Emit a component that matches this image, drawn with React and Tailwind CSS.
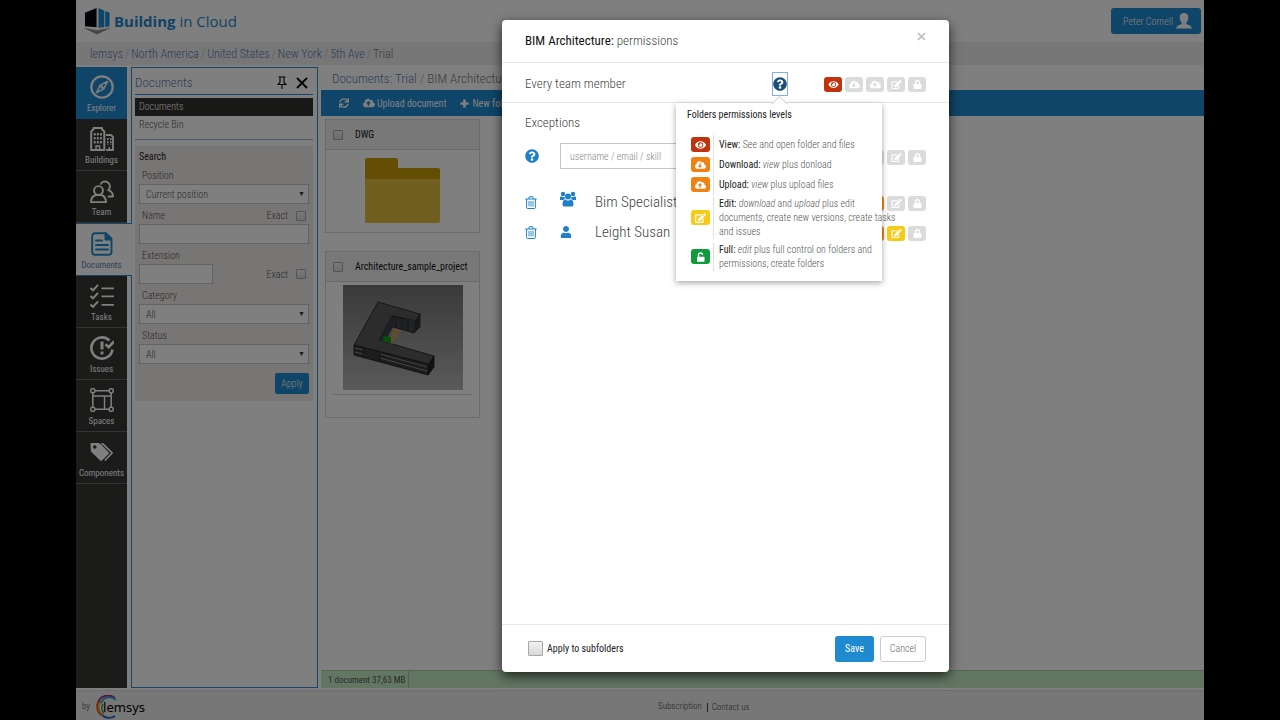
import React from 'react';
import {
  FaCloudDownloadAlt,
  FaCloudUploadAlt,
  FaEdit,
  FaEye,
  FaLock,
  FaQuestionCircle,
  FaSync,
  FaUser
} from 'react-icons/fa';

const ExplorerIcon = () => (
  <svg viewBox="0 0 24 24" className="w-6 h-6" fill="none" stroke="currentColor">
    <circle cx="12" cy="12" r="10.7" strokeWidth="2.2" />
    <path d="M17.5 6.5 13.8 13.8 6.5 17.5 10.2 10.2Z" strokeWidth="1.5" strokeLinejoin="round" />
    <path d="M10.2 10.2 13.8 13.8" strokeWidth="1.2" />
    <circle cx="12" cy="12" r="1.2" strokeWidth="1" />
  </svg>
);

const BuildingsIcon = () => (
  <svg viewBox="0 0 24 24" className="w-6 h-6" fill="none" stroke="currentColor">
    <path d="M1.2 23V4.5L3.5 2.3V1H12v1.3L14.3 4.5V23Z" strokeWidth="2" strokeLinejoin="round" />
    <path d="M4.7 6v11M7.8 6v11M10.9 6v11" strokeWidth="1.9" strokeDasharray="2.6 1.4" />
    <path d="M6 23v-4h3.6v4" strokeWidth="1.5" />
    <path d="M16 8h5l2 2v13h-7" strokeWidth="1.8" strokeLinejoin="round" />
    <path d="M17.8 11v7M20.8 11v7" strokeWidth="1.6" strokeDasharray="2 1.2" />
    <path d="M19.3 23v-3" strokeWidth="1.5" />
  </svg>
);

const TeamIcon = () => (
  <svg viewBox="0 0 24 24" className="w-6 h-6" fill="none" stroke="currentColor" strokeWidth="1.9" strokeLinejoin="round">
    <path d="M10.5 5.5a4.9 4.9 0 1 1 7.7 5.6c3 .9 4.8 3 4.8 6.4h-5.2" />
    <circle cx="8.5" cy="11.5" r="4.4" />
    <path d="M1 23.2c0-4 1.9-6.4 4.9-7.2h5.2c3 .8 4.9 3.2 4.9 7.2Z" />
  </svg>
);

const DocumentsIcon = () => (
  <svg viewBox="0 0 24 24" className="w-6 h-6 text-[#1f8ad0]" fill="none" stroke="currentColor">
    <path d="M5 1.2h11l5.5 5.5V20a2.8 2.8 0 0 1-2.8 2.8H5A2.8 2.8 0 0 1 2.2 20V4A2.8 2.8 0 0 1 5 1.2Z" strokeWidth="1.9" />
    <path d="M15 1v7h6.5Z" fill="currentColor" strokeWidth="1" />
    <path d="M6 8.5h6M6 13h12M6 17.5h12" strokeWidth="2" strokeLinecap="round" />
  </svg>
);

const TasksIcon = () => (
  <svg viewBox="0 0 24 24" className="w-6 h-6" fill="none" stroke="currentColor">
    <path d="M.5 4 3 6.3 8 .8M.5 12 3 14.3 8 8.8M.5 20.5 3 22.8 8 17.3" strokeWidth="2" />
    <path d="M11.5 4.3H24M11.5 12.3H24M11.5 20.8H24" strokeWidth="1.8" />
  </svg>
);

const IssuesIcon = () => (
  <svg viewBox="0 0 24 24" className="w-6 h-6" fill="none" stroke="currentColor">
    <path d="M19.5 4.5A10.6 10.6 0 1 0 22.5 13.5" strokeWidth="2.6" />
    <path d="M12 5.5v8" strokeWidth="3" />
    <path d="M12 15.5v3" strokeWidth="3" />
    <path d="M15.5 8.3 18.6 11.2 24 5.5" strokeWidth="2.7" />
  </svg>
);

const SpacesIcon = () => (
  <svg viewBox="0 0 24 24" className="w-6 h-6" fill="none" stroke="currentColor" strokeWidth="1.5">
    <rect x=".8" y=".8" width="4" height="4" rx="1.5" />
    <rect x="19.2" y=".8" width="4" height="4" rx="1.5" />
    <rect x=".8" y="19.2" width="4" height="4" rx="1.5" />
    <rect x="19.2" y="19.2" width="4" height="4" rx="1.5" />
    <path d="M5 2.8h14M5 21.2h14M2.8 5v14M21.2 5v14" />
    <path d="M3 8h18M14.5 8v13" strokeWidth="1.4" />
  </svg>
);

const ComponentsIcon = () => (
  <svg viewBox="0 0 24 24" className="w-6 h-6" fill="currentColor">
    <path
      fillRule="evenodd"
      d="M1.500 3h7c.6 0 1 .2 1.500.6l8.600 8.600c.5.500.5 1.200 0 1.700l-6.700 6.700c-.5.500-1.200.5-1.700 0L1.400 12A2 2 0 0 1 .8 10.500L.5 4c0-.6.4-1 1-1ZM4.800 5.200a1.800 1.800 0 1 0 0 3.600 1.800 1.800 0 0 0 0-3.600Z"
    />
    <path d="M11.500 3.800h1.300L22.200 13 14.800 20.500" fill="none" stroke="currentColor" strokeWidth="1.700" strokeLinejoin="round" />
  </svg>
);

const GroupIcon = () => (
  <svg viewBox="0 0 16 16" className="w-4 h-4 mb-[6px]" fill="currentColor">
    <circle cx="3" cy="3" r="2.2" />
    <circle cx="13" cy="3" r="2.2" />
    <path d="M0 9V6.500C0 5.500.6 5.200 1.300 5.500c1 .6 2.200.6 3.200.2A4.500 4.500 0 0 0 5 8.200C4.200 8.400 3.700 8.600 3.200 9Z" />
    <path d="M16 9V6.500c0-1-.6-1.300-1.300-1-1 .6-2.200.6-3.200.2A4.500 4.500 0 0 1 11 8.200c.8.200 1.300.4 1.800.8Z" />
    <circle cx="8" cy="5.500" r="3" />
    <path d="M2.500 13.500c0-3 .8-4.700 2.700-4.900 1.700 1.400 3.900 1.400 5.600 0 1.900.2 2.700 1.900 2.700 4.900 0 1.400-.8 2-2 2h-7c-1.200 0-2-.6-2-2Z" />
  </svg>
);

const TrashIcon = () => (
  <svg viewBox="0 0 12 13" className="w-3 h-[13px]" fill="none" stroke="currentColor">
    <path d="M.3 3h11.400M3.800 3 4.300.7h3.400L8.200 3M1.600 3v8.400c0 .7.400 1.100 1 1.100h6.800c.6 0 1-.4 1-1.100V3" />
    <path d="M4 5v5.500M6 5v5.500M8 5v5.500" strokeWidth=".9" />
  </svg>
);

const UnlockIcon = ({ className }) => (
  <svg viewBox="0 0 11 10" className={className} fill="none" stroke="currentColor">
    <path d="M3.500 5V3a2 2 0 0 1 4 0" strokeWidth="1.400" />
    <rect x="2" y="4.800" width="7.500" height="5" rx=".7" fill="currentColor" stroke="none" />
  </svg>
);

const navItems = [
  { icon: ExplorerIcon, label: 'Explorer', style: 'h-[52px] bg-[#1f8ad0] text-white border-[#1f8ad0]' },
  { icon: BuildingsIcon, label: 'Buildings' },
  { icon: TeamIcon, label: 'Team' },
  { icon: DocumentsIcon, label: 'Documents', style: 'h-[53px] relative w-[56px] pr-[5px] bg-white text-[#5b7db3] border-[#2f8fd0] border-t' },
  { icon: TasksIcon, label: 'Tasks' },
  { icon: IssuesIcon, label: 'Issues' },
  { icon: SpacesIcon, label: 'Spaces' },
  { icon: ComponentsIcon, label: 'Components' }
];

const breadcrumb = ['lemsys', 'North America', 'United States', 'New York', '5th Ave'];

const levels = [
  { icon: FaEye, color: 'bg-[#c0330c]', name: 'View' },
  { icon: FaCloudDownloadAlt, color: 'bg-[#ef8212]', name: 'Download' },
  { icon: FaCloudUploadAlt, color: 'bg-[#ef8212]', name: 'Upload' },
  { icon: FaEdit, color: 'bg-[#f7cb15]', name: 'Edit' },
  { icon: FaLock, color: 'bg-[#0f9a3c]', name: 'Full' }
];

const Tick = ({ className = 'w-[10px] h-[10px]', ...props }) => (
  <input
    type="checkbox"
    className={`appearance-none shrink-0 border border-[#a8a8a8] rounded-[1px] bg-gradient-to-b from-[#f2f2f2] to-[#d9d9d9] ${className}`}
    {...props}
  />
);

const Permissions = ({ active = 0 }) => (
  <div className="flex gap-[3px] pt-[2px]">
    {levels.map((level, index) => {
      const Icon = level.icon;
      return (
        <button
          key={level.name}
          type="button"
          aria-label={level.name}
          className={`w-[18px] h-[15px] rounded-[3px] flex items-center justify-center text-white ${index < active ? level.color : 'bg-[#dbdbdb]'}`}
        >
          <Icon className="w-[11px] h-[9px]" />
        </button>
      );
    })}
  </div>
);

const LevelRow = ({ icon: Icon, color, tall, children }) => (
  <li className={`flex items-center ${tall ? 'py-0.5' : 'h-5'}`}>
    <span className={`w-[19px] h-[15px] rounded-[3px] shrink-0 flex items-center justify-center text-white ${color}`}>
      <Icon className="w-[11px] h-[10px]" />
    </span>
    <p className="self-stretch flex items-center ml-[3px] pl-[5px] border-l border-[#e2e2e2] leading-[14px] whitespace-nowrap">
      <span>{children}</span>
    </p>
  </li>
);

const LevelsPopover = () => (
  <div className="absolute z-10 top-[31px] -left-[96px] w-[206px] h-[178px] bg-white shadow-[0_2px_6px_rgba(0,0,0,0.35)] pt-1 text-[10px] text-[#555]">
    <span className="absolute -top-[5px] left-[98px] w-[11px] h-[11px] rotate-45 bg-white border-l border-t border-[#d5d5d5]" />
    <h3 className="relative pl-[11px] leading-4 font-normal text-[#222]">Folders permissions levels</h3>
    <ul className="mt-3 pl-[15px]">
      <LevelRow icon={FaEye} color="bg-[#c0330c]">
        <b className="font-normal text-[#222]">View:</b> See and open folder and files
      </LevelRow>
      <LevelRow icon={FaCloudDownloadAlt} color="bg-[#ef8212]">
        <b className="font-normal text-[#222]">Download:</b> <i>view</i> plus donload
      </LevelRow>
      <LevelRow icon={FaCloudUploadAlt} color="bg-[#ef8212]">
        <b className="font-normal text-[#222]">Upload:</b> <i>view</i> plus upload files
      </LevelRow>
      <LevelRow icon={FaEdit} color="bg-[#f7cb15]" tall>
        <b className="font-normal text-[#222]">Edit:</b> <i>download</i> and <i>upload</i> plus edit
        <br />
        documents, create new versions, create tasks
        <br />
        and issues
      </LevelRow>
      <LevelRow icon={UnlockIcon} color="bg-[#0f9a3c]" tall>
        <b className="font-normal text-[#222]">Full:</b> <i>edit</i> plus full control on folders and
        <br />
        permissions, create folders
      </LevelRow>
    </ul>
  </div>
);

const Header = () => (
  <header>
    <div className="h-[42px] flex items-center justify-between pl-[7px] pr-[3px] bg-white">
      <div className="flex items-center gap-[2px] text-[15px] text-[#2387cc] font-normal font-['Open_Sans',sans-serif]">
        <svg viewBox="0 0 30 28" className="w-[29px] h-[27px]">
          <path d="M2 5 14 0v20L2 19Z" fill="#05060f" />
          <path d="M16 0 22 2.5V20l-6 .5Z" fill="#1f8ad0" />
          <path d="M23 3 27.5 5v14L23 20Z" fill="#1f8ad0" />
          <path d="M0 20.5 14.5 23 29 20.5 14.5 27.5Z" fill="#8f8f8f" />
        </svg>
        <p>
          <b>Building</b> in Cloud
        </p>
      </div>
      <button type="button" className="h-[26px] pl-3 pr-[9px] flex items-center gap-[3px] rounded-[3px] bg-[#1f8ad0] text-white text-[10px]">
        Peter Cornell
        <svg viewBox="0 0 16 16" className="w-4 h-4" fill="currentColor">
          <path d="M8 0c3 0 4.600 2 4.300 5-.2 2-1 3.600-2 4.600v1.700c3 .7 5.200 1.600 5.500 4.200H.2c.3-2.600 2.500-3.500 5.500-4.200V9.600c-1-1-1.800-2.600-2-4.600C3.400 2 5 0 8 0Z" />
        </svg>
      </button>
    </div>
    <nav className="h-[23px] pl-[14px] flex items-center gap-[2px] bg-[#eeeeee] text-[12px] text-[#5b7db3]">
      {breadcrumb.map((place) => (
        <React.Fragment key={place}>
          <a href="#">{place}</a>
          <span className="text-[#bbb]">/</span>
        </React.Fragment>
      ))}
      <span className="text-[#777]">Trial</span>
    </nav>
  </header>
);

const Sidebar = () => (
  <nav className="w-[51px] shrink-0 bg-[#363634]">
    {navItems.map((item) => {
      const Icon = item.icon;
      return (
        <a
          key={item.label}
          href="#"
          className={`pt-2 flex flex-col items-center border-b text-[9px] leading-[14px] font-normal ${item.style || 'h-[52px] border-[#666] text-white'}`}
        >
          <Icon />
          <span className="pt-[2px]">{item.label}</span>
        </a>
      );
    })}
  </nav>
);

const SelectField = ({ id, label, value }) => (
  <div className="relative">
    <label htmlFor={id} className="block h-5 pt-1 pl-[3px] leading-4">{label}</label>
    <select id={id} className="appearance-none block w-full h-5 pl-[6px] border border-[#c8c8c8] bg-white">
      <option>{value}</option>
    </select>
    <span className="absolute right-1 bottom-0 h-5 leading-5 text-[7px] text-[#333] pointer-events-none">▼</span>
  </div>
);

const SearchPanel = () => (
  <form className="mt-[6px] px-1 pb-[7px] bg-[#f0eaea] text-[10px] text-[#555]">
    <h3 className="h-[18px] pt-[3px] leading-4 font-normal text-[#222]">Search</h3>
    <SelectField id="position" label="Position" value="Current position" />
    <div className="flex justify-between items-center h-5 pl-[3px] pr-[3px]">
      <label htmlFor="name" className="pt-1 leading-4">Name</label>
      <label className="flex items-center gap-2 pt-1 leading-4">
        Exact <Tick />
      </label>
    </div>
    <input id="name" className="block w-full h-5 border border-[#c8c8c8] bg-white" />
    <label htmlFor="extension" className="block h-5 pt-1 pl-[3px] leading-4">Extension</label>
    <div className="flex justify-between items-center pr-[3px]">
      <input id="extension" className="block w-[74px] h-5 border border-[#c8c8c8] bg-white" />
      <label className="flex items-center gap-2">
        Exact <Tick />
      </label>
    </div>
    <SelectField id="category" label="Category" value="All" />
    <SelectField id="status" label="Status" value="All" />
    <button type="button" className="block ml-auto mt-[9px] w-[34px] h-[21px] rounded-[2px] bg-[#1f8ad0] text-white">
      Apply
    </button>
  </form>
);

const DocumentsPanel = () => (
  <aside className="w-[187px] shrink-0 ml-1 pl-[3px] pr-1 pt-[3px] border border-[#2f8fd0]">
    <div className="h-6 flex items-center border-b border-[#2f8fd0] text-[#5b7db3]">
      <h2 className="flex-1 text-[13px]">Documents</h2>
      <button type="button" aria-label="Pin" className="text-black mr-[9px]">
        <svg viewBox="0 0 10 13" className="w-[10px] h-[13px]" fill="none" stroke="currentColor" strokeWidth="1.1">
          <path d="M1.500 1h7M3 1v5.500M7 1v5.500M3 6.500 1 8.500h8L7 6.500M5 8.500V13" />
        </svg>
      </button>
      <button type="button" aria-label="Close panel" className="text-black mr-[5px]">
        <svg viewBox="0 0 12 12" className="w-3 h-3" fill="none" stroke="currentColor" strokeWidth="1.8">
          <path d="M1 1 11 11M11 1 1 11" />
        </svg>
      </button>
    </div>
    <ul className="mt-[3px] text-[10px] border-b border-[#8fb3cf] pb-[5px]">
      <li className="h-[18px] pl-1 leading-[18px] bg-[#30302e] text-white"><a href="#">Documents</a></li>
      <li className="h-[18px] pl-1 leading-[18px] text-[#555]"><a href="#">Recycle Bin</a></li>
    </ul>
    <SearchPanel />
  </aside>
);

const Card = ({ title, children }) => (
  <article className="w-[155px] border border-[#d4d4d4] text-[10px] font-normal text-[#111]">
    <label className="h-[30px] flex items-center gap-3 pl-[7px] bg-[#f1f1f1] border-b border-[#d4d4d4]">
      <Tick /> {title}
    </label>
    {children}
  </article>
);

const BuildingPreview = () => (
  <svg viewBox="0 0 120 105" className="block w-[120px] h-[105px] mx-auto">
    <defs>
      <linearGradient id="sky" x1="0" y1="0" x2="0" y2="1">
        <stop offset="0" stopColor="#747474" />
        <stop offset="1" stopColor="#b4b4b4" />
      </linearGradient>
    </defs>
    <rect width="120" height="105" fill="url(#sky)" />
    <path d="M35 17 77 29 75 36 49 31 36 55 91 71 86 80 11 60Z" fill="#59595b" stroke="#1d1d1d" strokeWidth=".8" />
    <path d="M77 29V42L71 48 50 42 49 31 72 37Z" fill="#41454d" stroke="#1d1d1d" strokeWidth=".8" />
    <path d="M72 37 77 29V42L71 48Z" fill="#2f3033" />
    <path d="M49 31 50 42 43 55 36 55Z" fill="#3c4048" />
    <path d="M50 43 58 45 49 59 45 57 49 50Z" fill="#c09858" />
    <path d="M41 51 48 52 48 58 39 56Z" fill="#0d9a1c" />
    <path d="M11 60 86 79 85 90 11 70Z" fill="#38383a" stroke="#1d1d1d" strokeWidth=".8" />
    <path d="M86 79 91 71V82L85 90Z" fill="#242426" stroke="#141414" strokeWidth=".8" />
    <path d="M12 63 20 65M12 67 20 69M37 69 84 82M37 73 84 86" stroke="#8a8a8a" strokeWidth="1" />
    <path d="M37 66V77M20 62V73M53 34V43M59 35V45M65 37V46" stroke="#232323" strokeWidth=".8" />
  </svg>
);

const FileBrowser = () => (
  <main className="flex-1 min-w-0 ml-[3px] flex flex-col">
    <h1 className="h-[23px] pl-[11px] leading-[24px] text-[13px] text-[#5b7db3] whitespace-nowrap">
      Documents: Trial <span className="text-[#aaa]">/</span> <span className="text-[#777]">BIM Architecture</span>
    </h1>
    <div className="h-[26px] pl-[18px] flex items-center bg-[#1f8ad0] text-white text-[10px] font-normal">
      <button type="button" aria-label="Refresh" className="mr-[14px]"><FaSync className="w-[10px] h-[10px]" /></button>
      <button type="button" className="flex items-center gap-[2px] mr-[14px]">
        <FaCloudUploadAlt className="w-3 h-3" /> Upload document
      </button>
      <button type="button" className="flex items-center gap-[3px]">
        <svg viewBox="0 0 9 9" className="w-[9px] h-[9px]" stroke="currentColor" strokeWidth="2.6">
          <path d="M4.500.5v8M.5 4.500h8" />
        </svg>
        New folder
      </button>
    </div>
    <section className="flex-1 pl-1 pt-[3px] flex flex-col gap-[18px]">
      <Card title="DWG">
        <svg viewBox="0 0 75 65" className="block w-[75px] h-[65px] mx-auto mt-2 mb-[9px]">
          <path d="M0 2a2 2 0 0 1 2-2h29a2 2 0 0 1 2 2v8h40a2 2 0 0 1 2 2v20H0Z" fill="#c79c06" />
          <path d="M0 21h75v42a2 2 0 0 1-2 2H2a2 2 0 0 1-2-2Z" fill="#e0bf3e" />
        </svg>
      </Card>
      <Card title="Architecture_sample_project">
        <div className="mx-[7px] pt-[3px] pb-1 mb-[22px] border-b border-[#d4d4d4]">
          <BuildingPreview />
        </div>
      </Card>
    </section>
    <div className="h-[18px] bg-[#c5ecc5] border-t border-[#a9cfa9] text-[9px] font-normal text-[#555] flex">
      <span className="pl-[7px] pr-[3px] leading-[18px] border-r border-[#9fc49f]">1 document 37,63 MB</span>
    </div>
  </main>
);

const Footer = () => (
  <footer className="h-[30px] pt-[3px] mt-[2px] flex items-center bg-[#eeeeee] border-t border-[#d6dde4] text-[9px] text-[#444]">
    <div className="w-[582px] pl-[6px] flex items-center gap-[5px]">
      by
      <span className="flex items-center">
        <svg viewBox="0 0 24 24" className="w-6 h-6 -mr-4" fill="none" strokeWidth="1.800">
          <path d="M20 3A11 11 0 0 0 3 7" stroke="#a02a86" />
          <path d="M3 7A11 11 0 0 0 6 20" stroke="#e0452a" />
          <path d="M6 6A9 9 0 0 0 8 20" stroke="#e69a1f" />
          <path d="M21 5A9 9 0 0 0 6 8" stroke="#2d9ed8" />
          <path d="M8 9A7 7 0 0 0 9 18" stroke="#3aa868" />
          <path d="M7 20A10 10 0 0 0 20 21" stroke="#2468b8" />
        </svg>
        <span className="relative text-[13px] leading-4 font-normal text-black font-['Noto_Sans',sans-serif]">lemsys</span>
      </span>
    </div>
    <a href="#">Subscription</a>
    <a href="#" className="ml-[5px] pl-1 leading-[9px] border-l border-[#444]">Contact us</a>
  </footer>
);

const members = [
  { icon: GroupIcon, name: 'Bim Specialist', active: 3 },
  { icon: FaUser, name: 'Leight Susan', active: 4 }
];

const PermissionsDialog = () => (
  <div
    role="dialog"
    aria-label="BIM Architecture permissions"
    className="w-[447px] flex flex-col bg-white rounded-[4px] text-[#444] shadow-[0_4px_12px_rgba(0,0,0,0.7)]"
  >
    <div className="h-[43px] px-[23px] flex items-center justify-between border-b border-[#e8e8e8] text-[13px]">
      <h2><span className="font-normal text-[#111]">BIM Architecture:</span> permissions</h2>
      <button type="button" aria-label="Close" className="pb-[9px] text-[#bbb]">
        <svg viewBox="0 0 9 9" className="w-[9px] h-[9px]" fill="none" stroke="currentColor" strokeWidth="1.6">
          <path d="M1 1 8 8M8 1 1 8" />
        </svg>
      </button>
    </div>

    {/* Default level for the whole team */}
    <div className="h-10 px-[23px] pt-[2px] flex items-center border-b border-[#e8e8e8]">
      <p className="flex-1 text-[13px]">Every team member</p>
      <div className="relative mr-9">
        <button type="button" aria-label="Permission levels" className="flex items-center justify-center w-4 h-6 border border-[#7fb0e6] text-[#1d4e79]">
          <FaQuestionCircle className="w-[14px] h-[14px] shrink-0" />
        </button>
        <LevelsPopover />
      </div>
      <Permissions active={1} />
    </div>

    {/* Exceptions */}
    <div className="flex-1 px-[23px] pt-[10px]">
      <h3 className="text-[13px] leading-5">Exceptions</h3>
      <div className="mt-[10px] mb-[18px] flex items-center">
        <button type="button" aria-label="Help" className="w-[35px] text-[#1f80c8]">
          <FaQuestionCircle className="w-[14px] h-[14px]" />
        </button>
        <input
          aria-label="Add exception"
          placeholder="username / email / skill"
          className="w-[240px] h-[26px] pl-[9px] border border-[#c4c4c4] text-[10px] placeholder:text-[#888]"
        />
        <div className="ml-auto"><Permissions /></div>
      </div>
      {members.map((member) => {
        const Icon = member.icon;
        return (
          <div key={member.name} className="h-[30px] flex items-center text-[#1f80c8]">
            <button type="button" aria-label="Remove" className="w-[35px]"><TrashIcon /></button>
            <span className="w-[35px]"><Icon className="w-3 h-3" /></span>
            <span className="flex-1 text-[15px] text-[#444]">{member.name}</span>
            <Permissions active={member.active} />
          </div>
        );
      })}
    </div>

    <div className="h-12 pl-[26px] pr-[23px] flex items-center gap-[6px] border-t border-[#e8e8e8] text-[10px]">
      <label className="flex-1 flex items-center gap-1 font-normal text-[#222]">
        <Tick className="w-[15px] h-[15px]" /> Apply to subfolders
      </label>
      <button type="button" className="h-[26px] w-[39px] rounded-[3px] bg-[#1f8ad0] font-normal text-white">Save</button>
      <button type="button" className="h-[26px] w-[46px] rounded-[3px] border border-[#ccc] text-[#666]">Cancel</button>
    </div>
  </div>
);

const App = () => (
  <div className="h-screen px-[76px] bg-black overflow-hidden font-light font-['Roboto_Condensed',Roboto,sans-serif]">
    <div className="relative h-full flex flex-col bg-white">
      <Header />
      <div className="flex-1 min-h-0 mt-[2px] flex">
        <Sidebar />
        <DocumentsPanel />
        <FileBrowser />
      </div>
      <Footer />
      <div className="absolute inset-0 pt-5 pb-12 pl-[426px] flex bg-black/50">
        <PermissionsDialog />
      </div>
    </div>
  </div>
);

export default App;
